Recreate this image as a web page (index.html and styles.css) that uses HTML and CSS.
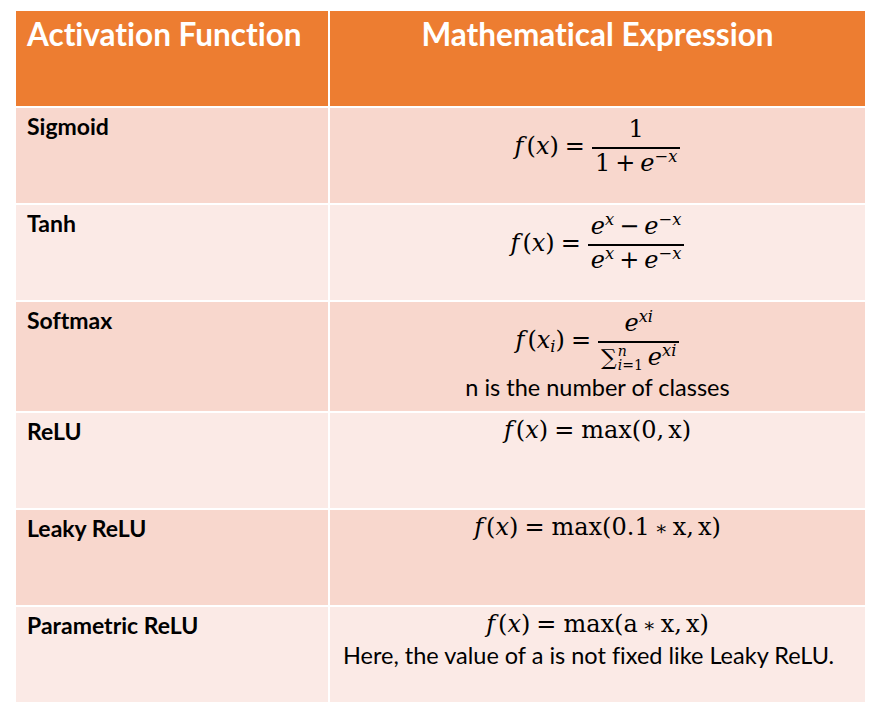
FILE: index.html
```html
<!DOCTYPE html>
<html>
<head>
<meta charset="utf-8">
<link rel="stylesheet" href="styles.css">
</head>
<body>
<div class="table">
  <div class="cell head left">Activation Function</div>
  <div class="cell head right">Mathematical Expression</div>

  <div class="cell label odd">Sigmoid</div>
  <div class="cell math odd">
    <div class="eq"><i class="f">f</i>(<i>x</i>)<span class="op">=</span><span class="frac"><span class="num">1</span><span class="den">1<span class="bop">+</span><i>e</i><sup>−<i>x</i></sup></span></span></div>
  </div>

  <div class="cell label even">Tanh</div>
  <div class="cell math even">
    <div class="eq"><i class="f">f</i>(<i>x</i>)<span class="op">=</span><span class="frac"><span class="num"><i>e</i><sup><i>x</i></sup><span class="bop">−</span><i>e</i><sup>−<i>x</i></sup></span><span class="den"><i>e</i><sup><i>x</i></sup><span class="bop">+</span><i>e</i><sup>−<i>x</i></sup></span></span></div>
  </div>

  <div class="cell label odd">Softmax</div>
  <div class="cell math odd">
    <div class="eq"><i class="f">f</i>(<i>x</i><sub><i>i</i></sub>)<span class="op">=</span><span class="frac"><span class="num"><i>e</i><sup><i>xi</i></sup></span><span class="den"><span class="sum">∑</span><span class="limits"><span class="lup"><i>n</i></span><span class="ldown"><i>i</i>=1</span></span><i>e</i><sup><i>xi</i></sup></span></span></div>
    <div class="note gap">n is the number of classes</div>
  </div>

  <div class="cell label even">ReLU</div>
  <div class="cell math even">
    <div class="eq line"><i class="f">f</i>(<i>x</i>)<span class="op">=</span>max(0,<span class="thin"></span>x)</div>
  </div>

  <div class="cell label odd">Leaky ReLU</div>
  <div class="cell math odd">
    <div class="eq line"><i class="f">f</i>(<i>x</i>)<span class="op">=</span>max(0.1<span class="bop star">∗</span>x,<span class="thin"></span>x)</div>
  </div>

  <div class="cell label even">Parametric ReLU</div>
  <div class="cell math even">
    <div class="eq line"><i class="f">f</i>(<i>x</i>)<span class="op">=</span>max(a<span class="bop star">∗</span>x,<span class="thin"></span>x)</div>
    <div class="note shift">Here, the value of a is not fixed like Leaky ReLU.</div>
  </div>
</div>
</body>
</html>
```

FILE: styles.css
```css
html, body {
  margin: 0;
  padding: 0;
  background: #ffffff;
}
body {
  padding: 11px 0 0 16px;
  font-family: Lato, "Open Sans", sans-serif;
  font-variant-ligatures: none;
}
.table {
  display: grid;
  grid-template-columns: 312px 535px;
  grid-template-rows: 95px 95px 95px 109px 95px 95px 95px;
  column-gap: 2px;
  row-gap: 2px;
  width: 849px;
}
.cell {
  box-sizing: border-box;
}
.head {
  background: #ED7D31;
  color: #ffffff;
  font-weight: 700;
  font-size: 31.5px;
  line-height: 1.2;
  padding-top: 5px;
}
.head.left {
  padding-left: 11px;
}
.head.right {
  text-align: center;
}
.odd {
  background: #F8D7CD;
}
.even {
  background: #FBEAE6;
}
.label {
  font-weight: 700;
  font-size: 23px;
  line-height: 1.2;
  color: #000000;
  padding: 5px 0 0 11px;
}
.math {
  text-align: center;
  padding-top: 8px;
  color: #000000;
}
.eq {
  font-family: "DejaVu Serif", "Liberation Serif", serif;
  font-size: 24px;
  line-height: 1.15;
  white-space: nowrap;
}
.eq.line {
  line-height: 1.2;
  margin-top: -5px;
}
.eq i {
  font-style: italic;
}
.eq i.f {
  margin-right: 3px;
}
.op {
  margin: 0 7px 0 6px;
}
.bop {
  margin: 0 5px;
}
.star {
  font-size: 0.8em;
}
.thin {
  display: inline-block;
  width: 4px;
}
.frac {
  display: inline-block;
  vertical-align: -0.68em;
  text-align: center;
}
.num {
  display: block;
  padding: 0 3px 3px 3px;
  border-bottom: 2px solid #000;
}
.den {
  display: block;
  padding: 1px 3px 0 3px;
}
sup {
  font-size: 0.68em;
  vertical-align: 0.55em;
  line-height: 0;
}
sub {
  font-size: 0.68em;
  vertical-align: -0.2em;
  line-height: 0;
}
.sum {
  font-size: 22px;
}
.limits {
  display: inline-block;
  font-size: 14px;
  line-height: 14px;
  margin: 0 5px 0 1px;
  vertical-align: -5px;
  text-align: left;
}
.lup, .ldown {
  display: block;
  white-space: nowrap;
}
.note {
  font-family: Lato, "Open Sans", sans-serif;
  font-size: 23.5px;
  line-height: 1.2;
  margin-top: 2px;
}
.note.gap {
  margin-top: 1px;
}
.note.shift {
  margin-right: 18px;
}
```
